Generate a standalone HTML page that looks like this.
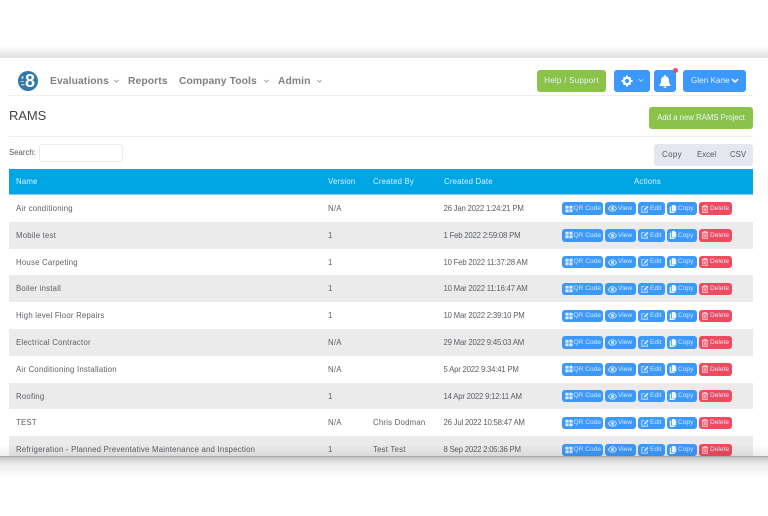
<!DOCTYPE html>
<html>
<head>
<meta charset="utf-8">
<style>
html,body{margin:0;padding:0;width:768px;height:516px;overflow:hidden;background:#fff;font-family:"Liberation Sans",sans-serif}
.wrap{position:absolute;left:0;top:0;width:768px;height:516px;overflow:hidden;filter:blur(.3px)}
.top{position:absolute;left:0;top:46px;width:768px;height:12px;background:linear-gradient(rgba(0,0,0,0),rgba(0,0,0,.12))}
.under{position:absolute;left:0;top:457px;width:768px;height:20px;background:linear-gradient(rgba(0,0,0,.24),rgba(0,0,0,.09) 30%,rgba(0,0,0,0))}
.sheet{position:absolute;left:0;top:58px;width:768px;height:398px;background:#fff;border-bottom:1px solid #aaa}
.t{position:absolute;white-space:nowrap}
.nav{top:74.700px;line-height:14px;font-size:10.300px;font-weight:bold;color:#808080;letter-spacing:.1px}
.btn{position:absolute;border-radius:3px;color:#e8f3ff;font-size:8px;text-align:center;white-space:nowrap}
.g{background:#8bc34a}
.b{background:#3b99fc}
.line{position:absolute;height:1px;background:#eceef2}
.head{position:absolute;left:9px;top:169px;width:744px;height:26px;background:#00a6e4;border-bottom:1px solid #7fd0f0;box-sizing:border-box}
.th{top:176px;line-height:12px;font-size:7.800px;color:#d9f2fc;letter-spacing:.2px}
.rows{position:absolute;left:9px;top:195px;width:744px;height:261px;overflow:hidden}
.r{position:relative;height:26.800px;font-size:7.800px;color:#5a5f66;letter-spacing:.22px}
.r:nth-child(even){background:#ebebeb}
.r span{position:absolute;top:0;line-height:27px;white-space:nowrap}
.c1{left:7px}.c2{left:319px}.c3{left:364px}.c4{left:434.500px;letter-spacing:-.22px}
.r i{position:absolute;top:7.400px;height:12.500px;line-height:12.500px;border-radius:3px;background:#3b99fc;color:#d6e9ff;font-style:normal;font-size:6.600px;letter-spacing:0;box-sizing:border-box;white-space:nowrap}
.r i svg{position:absolute;left:2.500px;top:2.200px;width:8px;height:8px}
.r i b{position:absolute;left:11.500px;font-weight:normal;top:.4px}
.q{left:553px;width:41px}.v{left:596px;width:31px}.e{left:629px;width:27px}.o{left:657.500px;width:30px}.d{left:689.500px;width:33.500px;background:#f04a5e!important}
.v b{left:13px!important}.e b{left:12px!important}
.v svg{left:2.500px!important;width:9px!important;height:9px!important;top:1.800px!important}
.bt{position:absolute;left:0;top:444px;width:768px;height:12px;background:linear-gradient(rgba(0,0,0,0),rgba(0,0,0,.07))}
</style>
</head>
<body>
<svg width="0" height="0" style="position:absolute">
<symbol id="iq" viewBox="0 0 10 10"><path fill="#dcecff" d="M.5 1h4v3.500h-4zM5.500 1h4v3.500h-4zM.5 5.500h4V9h-4zM5.500 5.500h4V9h-4z"/></symbol>
<symbol id="iv" viewBox="0 0 10 10"><path fill="none" stroke="#dcecff" stroke-width="1" d="M.5 5C2 2.500 3.500 2 5 2s3 .5 4.500 3C8 7.500 6.500 8 5 8S2 7.500.5 5z"/><circle cx="5" cy="5" r="1.600" fill="#dcecff"/></symbol>
<symbol id="ie" viewBox="0 0 10 10"><path fill="none" stroke="#dcecff" stroke-width="1" d="M8 6v3H1V2h3.500"/><path fill="#dcecff" d="M4 5l4-4 1.500 1.500-4 4L3.500 7z"/></symbol>
<symbol id="io" viewBox="0 0 10 10"><path fill="#eef6ff" d="M3.500 0h3.500l2 2v6H3.500z"/><path fill="#eef6ff" d="M1 2h1.500v6.500H7V10H1z"/></symbol>
<symbol id="id" viewBox="0 0 10 10"><path fill="none" stroke="#ffdbe0" stroke-width="1" d="M2.200 2.500h5.600V9.500H2.200zM1 2h8M3.500 2V.7h3V2M4 4v4M6 4v4"/></symbol>
</svg>

<div class="wrap">
<div class="top"></div>
<div class="under"></div>
<div class="sheet"></div>

<svg class="t" style="left:17.500px;top:70.500px" width="20" height="20" viewBox="0 0 20 20"><circle cx="10" cy="10" r="10" fill="#2f78a8"/><path d="M3.500 5h2v3h-2zM2.500 10h3.500v1H2.500zM3 13h3.500v1.500H3z" fill="#a9cde3"/></svg>
<div class="t" style="left:24px;top:70.500px;width:12px;text-align:center;line-height:20px;font-size:18px;font-weight:bold;color:#fff">8</div>

<div class="t nav" style="left:50px">Evaluations</div>
<svg class="t" style="left:114px;top:79px" width="5" height="4" viewBox="0 0 5 4"><path d="M.5 1l2 2 2-2" fill="none" stroke="#888" stroke-width=".8"/></svg>
<div class="t nav" style="left:128px">Reports</div>
<div class="t nav" style="left:179px">Company Tools</div>
<svg class="t" style="left:264px;top:79px" width="5" height="4" viewBox="0 0 5 4"><path d="M.5 1l2 2 2-2" fill="none" stroke="#888" stroke-width=".8"/></svg>
<div class="t nav" style="left:278px">Admin</div>
<svg class="t" style="left:317px;top:79px" width="5" height="4" viewBox="0 0 5 4"><path d="M.5 1l2 2 2-2" fill="none" stroke="#888" stroke-width=".8"/></svg>

<div class="btn g" style="left:537px;top:70px;width:69px;height:22px;line-height:22px;letter-spacing:.25px">Help / Support</div>
<div class="btn b" style="left:614px;top:70px;width:36px;height:22px"></div>
<svg class="t" style="left:621px;top:75px" width="12" height="12" viewBox="0 0 12 12"><circle cx="6" cy="6" r="3.200" fill="none" stroke="#fff" stroke-width="2.200"/><path d="M5 .5h2v2H5zM5 9.500h2v2H5zM.5 5h2v2h-2zM9.500 5h2v2h-2zM1.800 3.200l1.400-1.400 1.200 1.200-1.400 1.400zM7.600 9l1.400-1.400 1.200 1.200-1.400 1.400zM1.800 8.800l1.200-1.200 1.400 1.400-1.200 1.200zM7.600 3l1.200-1.200 1.400 1.400L9 4.400z" fill="#fff"/></svg>
<svg class="t" style="left:638px;top:78px" width="6" height="5" viewBox="0 0 6 5"><path d="M.8 1l2.200 2.200L5.200 1" fill="none" stroke="#cfe6ff" stroke-width=".8"/></svg>
<div class="btn b" style="left:654px;top:70px;width:22px;height:22px"></div>
<svg class="t" style="left:659px;top:74.500px" width="12" height="13" viewBox="0 0 12 13"><path fill="#fff" d="M6 0c.6 0 1 .4 1 1v.5c2 .4 3 2 3 4 0 2.500.7 3.500 1.500 4.500v1H.5v-1C1.300 9 2 8 2 5.500c0-2 1-3.600 3-4V1c0-.6.4-1 1-1zM4.500 11.500h3C7.500 12.400 6.800 13 6 13s-1.500-.6-1.500-1.500z"/></svg>
<div class="t" style="left:672.500px;top:68px;width:5px;height:5px;border-radius:50%;background:#f04a5e"></div>
<div class="btn b" style="left:683px;top:70px;width:63px;height:22px;line-height:22px;text-align:left;text-indent:8px;letter-spacing:.1px">Glen Kane</div>
<svg class="t" style="left:731px;top:78px" width="8" height="6" viewBox="0 0 8 6"><path d="M1 1l3 3 3-3" fill="none" stroke="#fff" stroke-width="1.500"/></svg>

<div class="line" style="left:9px;top:95px;width:744px"></div>

<div class="t" style="left:9px;top:107.500px;line-height:16px;font-size:13px;color:#444;letter-spacing:-.1px">RAMS</div>
<div class="btn g" style="left:649px;top:107px;width:104px;height:22px;line-height:22px;font-size:7.800px;letter-spacing:-.02px">Add a new RAMS Project</div>

<div class="line" style="left:9px;top:136px;width:744px"></div>

<div class="t" style="left:9px;top:147px;line-height:12px;font-size:7.800px;color:#555">Search:</div>
<div class="t" style="left:39px;top:144px;width:82px;height:16px;border:1px solid #e8ebf1;border-radius:3px;background:#fff"></div>

<div class="t" style="left:654px;top:144px;width:99px;height:22px;background:#e4e6f0;border-radius:3px"></div>
<div class="t" style="left:662px;top:149px;line-height:12px;font-size:8px;color:#555a66;letter-spacing:.3px">Copy</div>
<div class="t" style="left:697px;top:149px;line-height:12px;font-size:7.800px;color:#555a66">Excel</div>
<div class="t" style="left:730px;top:149px;line-height:12px;font-size:7.800px;color:#555a66">CSV</div>

<div class="head"></div>
<div class="t th" style="left:16px">Name</div>
<div class="t th" style="left:328px">Version</div>
<div class="t th" style="left:373px">Created By</div>
<div class="t th" style="left:444px">Created Date</div>
<div class="t th" style="left:634px">Actions</div>

<div class="rows">
<div class="r"><span class="c1">Air conditioning</span><span class="c2">N/A</span><span class="c4">26 Jan 2022 1:24:21 PM</span><i class="q"><svg><use href="#iq"/></svg><b>QR Code</b></i><i class="v"><svg><use href="#iv"/></svg><b>View</b></i><i class="e"><svg><use href="#ie"/></svg><b>Edit</b></i><i class="o"><svg><use href="#io"/></svg><b>Copy</b></i><i class="d"><svg><use href="#id"/></svg><b>Delete</b></i></div>
<div class="r"><span class="c1">Mobile test</span><span class="c2">1</span><span class="c4">1 Feb 2022 2:59:08 PM</span><i class="q"><svg><use href="#iq"/></svg><b>QR Code</b></i><i class="v"><svg><use href="#iv"/></svg><b>View</b></i><i class="e"><svg><use href="#ie"/></svg><b>Edit</b></i><i class="o"><svg><use href="#io"/></svg><b>Copy</b></i><i class="d"><svg><use href="#id"/></svg><b>Delete</b></i></div>
<div class="r"><span class="c1">House Carpeting</span><span class="c2">1</span><span class="c4">10 Feb 2022 11:37:28 AM</span><i class="q"><svg><use href="#iq"/></svg><b>QR Code</b></i><i class="v"><svg><use href="#iv"/></svg><b>View</b></i><i class="e"><svg><use href="#ie"/></svg><b>Edit</b></i><i class="o"><svg><use href="#io"/></svg><b>Copy</b></i><i class="d"><svg><use href="#id"/></svg><b>Delete</b></i></div>
<div class="r"><span class="c1">Boiler install</span><span class="c2">1</span><span class="c4">10 Mar 2022 11:16:47 AM</span><i class="q"><svg><use href="#iq"/></svg><b>QR Code</b></i><i class="v"><svg><use href="#iv"/></svg><b>View</b></i><i class="e"><svg><use href="#ie"/></svg><b>Edit</b></i><i class="o"><svg><use href="#io"/></svg><b>Copy</b></i><i class="d"><svg><use href="#id"/></svg><b>Delete</b></i></div>
<div class="r"><span class="c1">High level Floor Repairs</span><span class="c2">1</span><span class="c4">10 Mar 2022 2:39:10 PM</span><i class="q"><svg><use href="#iq"/></svg><b>QR Code</b></i><i class="v"><svg><use href="#iv"/></svg><b>View</b></i><i class="e"><svg><use href="#ie"/></svg><b>Edit</b></i><i class="o"><svg><use href="#io"/></svg><b>Copy</b></i><i class="d"><svg><use href="#id"/></svg><b>Delete</b></i></div>
<div class="r"><span class="c1">Electrical Contractor</span><span class="c2">N/A</span><span class="c4">29 Mar 2022 9:45:03 AM</span><i class="q"><svg><use href="#iq"/></svg><b>QR Code</b></i><i class="v"><svg><use href="#iv"/></svg><b>View</b></i><i class="e"><svg><use href="#ie"/></svg><b>Edit</b></i><i class="o"><svg><use href="#io"/></svg><b>Copy</b></i><i class="d"><svg><use href="#id"/></svg><b>Delete</b></i></div>
<div class="r"><span class="c1">Air Conditioning Installation</span><span class="c2">N/A</span><span class="c4">5 Apr 2022 9:34:41 PM</span><i class="q"><svg><use href="#iq"/></svg><b>QR Code</b></i><i class="v"><svg><use href="#iv"/></svg><b>View</b></i><i class="e"><svg><use href="#ie"/></svg><b>Edit</b></i><i class="o"><svg><use href="#io"/></svg><b>Copy</b></i><i class="d"><svg><use href="#id"/></svg><b>Delete</b></i></div>
<div class="r"><span class="c1">Roofing</span><span class="c2">1</span><span class="c4">14 Apr 2022 9:12:11 AM</span><i class="q"><svg><use href="#iq"/></svg><b>QR Code</b></i><i class="v"><svg><use href="#iv"/></svg><b>View</b></i><i class="e"><svg><use href="#ie"/></svg><b>Edit</b></i><i class="o"><svg><use href="#io"/></svg><b>Copy</b></i><i class="d"><svg><use href="#id"/></svg><b>Delete</b></i></div>
<div class="r"><span class="c1">TEST</span><span class="c2">N/A</span><span class="c3">Chris Dodman</span><span class="c4">26 Jul 2022 10:58:47 AM</span><i class="q"><svg><use href="#iq"/></svg><b>QR Code</b></i><i class="v"><svg><use href="#iv"/></svg><b>View</b></i><i class="e"><svg><use href="#ie"/></svg><b>Edit</b></i><i class="o"><svg><use href="#io"/></svg><b>Copy</b></i><i class="d"><svg><use href="#id"/></svg><b>Delete</b></i></div>
<div class="r"><span class="c1">Refrigeration - Planned Preventative Maintenance and Inspection</span><span class="c2">1</span><span class="c3">Test Test</span><span class="c4">8 Sep 2022 2:05:36 PM</span><i class="q"><svg><use href="#iq"/></svg><b>QR Code</b></i><i class="v"><svg><use href="#iv"/></svg><b>View</b></i><i class="e"><svg><use href="#ie"/></svg><b>Edit</b></i><i class="o"><svg><use href="#io"/></svg><b>Copy</b></i><i class="d"><svg><use href="#id"/></svg><b>Delete</b></i></div>
</div>
<div class="bt"></div>
</div>
</body>
</html>
